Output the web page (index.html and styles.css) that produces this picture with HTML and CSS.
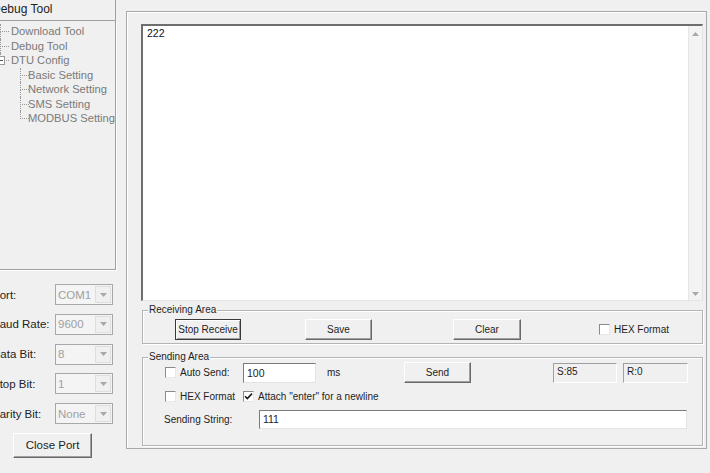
FILE: index.html
```html
<!DOCTYPE html>
<html lang="en">
<head>
    <meta charset="UTF-8">
    <meta name="viewport" content="width=device-width, initial-scale=1.0">
    <title>Debug Tool</title>
    <link rel="stylesheet" href="styles.css">
</head>
<body>

<div id="app">
    <!-- left pane: menu tree + port settings -->
    <div id="side">
        <div class="side-title">Debug Tool</div>
        <div class="tree">
            <ul class="tree-root">
                <li>Download Tool</li>
                <li>Debug Tool</li>
                <li><span class="toggle"></span>DTU Config
                    <ul class="tree-sub">
                        <li>Basic Setting</li>
                        <li>Network Setting</li>
                        <li>SMS Setting</li>
                        <li>MODBUS Setting</li>
                    </ul>
                </li>
            </ul>
        </div>

        <div class="port-form">
            <div class="form-row">
                <span class="form-label">Port:</span>
                <div class="combo"><span class="combo-value">COM1</span><span class="combo-btn"><svg width="7" height="4" viewBox="0 0 7 4"><path d="M0 0h7L3.5 4z" fill="#a8a8a8"/></svg></span></div>
            </div>
            <div class="form-row">
                <span class="form-label">Baud Rate:</span>
                <div class="combo"><span class="combo-value">9600</span><span class="combo-btn"><svg width="7" height="4" viewBox="0 0 7 4"><path d="M0 0h7L3.5 4z" fill="#a8a8a8"/></svg></span></div>
            </div>
            <div class="form-row">
                <span class="form-label">Data Bit:</span>
                <div class="combo"><span class="combo-value">8</span><span class="combo-btn"><svg width="7" height="4" viewBox="0 0 7 4"><path d="M0 0h7L3.5 4z" fill="#a8a8a8"/></svg></span></div>
            </div>
            <div class="form-row">
                <span class="form-label">Stop Bit:</span>
                <div class="combo"><span class="combo-value">1</span><span class="combo-btn"><svg width="7" height="4" viewBox="0 0 7 4"><path d="M0 0h7L3.5 4z" fill="#a8a8a8"/></svg></span></div>
            </div>
            <div class="form-row">
                <span class="form-label">Parity Bit:</span>
                <div class="combo"><span class="combo-value">None</span><span class="combo-btn"><svg width="7" height="4" viewBox="0 0 7 4"><path d="M0 0h7L3.5 4z" fill="#a8a8a8"/></svg></span></div>
            </div>
        </div>

        <button class="btn close-btn">Close Port</button>
    </div>

    <!-- right pane: receive / send -->
    <div id="main">
        <div class="receive-box">
            <div class="receive-text">222</div>
            <div class="scrollbar">
                <svg width="7" height="4" viewBox="0 0 7 4"><path d="M3.5 0L7 4H0z" fill="#a8a8a8"/></svg>
                <svg width="7" height="4" viewBox="0 0 7 4"><path d="M0 0h7L3.5 4z" fill="#a8a8a8"/></svg>
            </div>
        </div>

        <div class="group receive-group">
            <span class="group-title">Receiving Area</span>
            <div class="group-row">
                <button class="btn btn-default stop-btn">Stop Receive</button>
                <button class="btn save-btn">Save</button>
                <button class="btn clear-btn">Clear</button>
                <label class="check recv-hex"><span class="chk"></span>HEX Format</label>
            </div>
        </div>

        <div class="group send-group">
            <span class="group-title">Sending Area</span>
            <div class="send-row">
                <label class="check check-fixed"><span class="chk"></span>Auto Send:</label>
                <div class="field interval">100</div>
                <span class="unit">ms</span>
                <button class="btn send-btn">Send</button>
                <div class="stat stat-s">S:85</div>
                <div class="stat">R:0</div>
            </div>
            <div class="send-row row-opts">
                <label class="check check-fixed"><span class="chk"></span>HEX Format</label>
                <label class="check"><span class="chk"><svg width="9" height="9" viewBox="0 0 9 9"><path d="M1 4.2l2.3 2.4L8 1.6" fill="none" stroke="#1a1a1a" stroke-width="1.6"/></svg></span>Attach "enter" for a newline</label>
            </div>
            <div class="send-row row-string">
                <span class="string-label">Sending String:</span>
                <div class="field string-field">111</div>
            </div>
        </div>
    </div>
</div>

</body>
</html>
```

FILE: styles.css
```css
body {
    margin: 0;
    padding: 0;
    background-color: #f0f0f0;
    font-family: "Liberation Sans", Arial, sans-serif;
    color: #1e1e1e;
    overflow: hidden;
}

#app {
    display: flex;
    width: 710px;
    height: 473px;
    overflow: hidden;
}

/* ---------- left pane ---------- */

#side {
    width: 125px;
    margin-left: -8px; /* the pane is scrolled a little off the left edge */
    flex-shrink: 0;
}

.side-title {
    width: 123px;
    height: 19px;
    font-size: 12px;
    line-height: 16px;
    padding-top: 1px;
    color: #222;
    border-right: 1px solid #a0a0a0;
    border-bottom: 1px solid #a0a0a0;
}

.tree {
    width: 123px;
    height: 248px;
    border-right: 1px solid #a0a0a0;
    border-bottom: 1px solid #a0a0a0;
    box-shadow: 1px 1px 0 #fff;
    font-size: 11.2px;
    color: #7a7a7a;
}

.tree ul {
    list-style: none;
    margin: 0;
    padding: 0;
}

.tree li {
    position: relative;
    line-height: 14.5px;
    white-space: nowrap;
}

.tree li::before {
    content: "";
    position: absolute;
    left: 0;
    top: 0;
    width: 8px;
    height: 7px;
    border-left: 1px dotted #999;
    border-bottom: 1px dotted #999;
}

.tree li:not(:last-child)::after {
    content: "";
    position: absolute;
    left: 0;
    top: 7px;
    bottom: 0;
    border-left: 1px dotted #999;
}

.tree-root {
    margin-left: 8px !important;
    padding-top: 3px !important;
}

.tree-root > li {
    padding-left: 11px;
}

.tree-sub {
    margin-left: 9px !important;
}

.tree-sub > li {
    padding-left: 8px;
}

.toggle {
    position: absolute;
    left: -4px;
    top: 3px;
    width: 7px;
    height: 7px;
    border: 1px solid #999;
    background: #fff;
    z-index: 1;
}

.toggle::after {
    content: "";
    position: absolute;
    left: 1px;
    top: 3px;
    width: 5px;
    height: 1px;
    background: #555;
}

.port-form {
    margin-top: 14px;
}

.form-row {
    display: flex;
    align-items: center;
    height: 21px;
    margin-bottom: 8.75px;
    font-size: 11.5px;
}

.form-label {
    width: 63px;
    flex-shrink: 0;
}

.combo {
    display: flex;
    align-items: center;
    justify-content: space-between;
    width: 58px;
    height: 21px;
    box-sizing: border-box;
    border: 1px solid #a8a8a8;
    background: #f4f4f4;
    color: #a0a0a0;
    padding: 0 1px 0 2px;
}

.combo-btn {
    display: flex;
    align-items: center;
    justify-content: center;
    width: 14px;
    height: 15px;
    border: 1px solid #dedede;
    background: #f0f0f0;
}

.btn {
    font-family: "Liberation Sans", Arial, sans-serif;
    background: #f0f0f0;
    color: #1e1e1e;
    border: 1px solid;
    border-color: #fff #696969 #696969 #fff;
    box-shadow: inset -1px -1px 0 #a0a0a0;
    padding: 0;
    cursor: pointer;
}

.close-btn {
    display: block;
    margin: 0 0 0 21px;
    width: 79px;
    height: 25px;
    font-size: 11.5px;
}

/* ---------- right pane ---------- */

#main {
    margin-left: 9px;
    margin-top: 11px;
    width: 581px;
    height: 438px;
    box-sizing: border-box;
    border: 1px solid #a8a8a8;
    box-shadow: inset 1px 1px 0 #fff;
    padding: 12px 3px 0 14px;
    font-size: 10px;
}

.receive-box {
    display: flex;
    height: 277px;
    box-sizing: border-box;
    border-top: 2px solid #6e6e6e;
    border-left: 2px solid #6e6e6e;
    border-right: 1px solid #e3e3e3;
    border-bottom: 1px solid #e3e3e3;
    background: #fff;
}

.receive-text {
    flex: 1;
    padding: 1px 4px;
    font-size: 10.5px;
    color: #111;
}

.scrollbar {
    display: flex;
    flex-direction: column;
    justify-content: space-between;
    align-items: center;
    width: 13px;
    padding: 6px 0 4px;
    background: #f3f3f3;
    border-left: 1px solid #e6e6e6;
}

.group {
    position: relative;
    box-sizing: border-box;
    border: 1px solid #b4b4b4;
    box-shadow: inset 1px 1px 0 #fff, 1px 1px 0 #fff;
    margin-left: 1px;
}

.group-title {
    position: absolute;
    left: 5px;
    top: -7px;
    padding: 0 1px;
    line-height: 12px;
    background: #f0f0f0;
}

.receive-group {
    margin-top: 9px;
    height: 34px;
    padding-top: 8px;
}

.group-row {
    display: flex;
    align-items: center;
}

.group-row .btn,
.send-btn {
    height: 21px;
    font-size: 10px;
}

.stop-btn {
    margin-left: 32px;
    width: 66px;
    border: 1px solid #3a3a3a;
    box-shadow: inset 1px 1px 0 #fff, inset -1px -1px 0 #a0a0a0;
}

.save-btn {
    margin-left: 64px;
    width: 67px;
}

.clear-btn {
    margin-left: 81px;
    width: 68px;
}

.check {
    display: flex;
    align-items: center;
    white-space: nowrap;
}

.chk {
    display: flex;
    align-items: center;
    justify-content: center;
    width: 11px;
    height: 11px;
    box-sizing: border-box;
    margin-right: 4px;
    border: 1px solid;
    border-color: #8a8a8a #e8e8e8 #e8e8e8 #8a8a8a;
    background: #fff;
}

.recv-hex {
    margin-left: 78px;
}

.send-group {
    margin-top: 13px;
    height: 89px;
    padding: 4px 0 0 22px;
}

.send-row {
    display: flex;
    align-items: center;
    height: 21px;
}

.check-fixed {
    width: 78px;
}

.field {
    height: 20px;
    box-sizing: border-box;
    background: #fff;
    border: 1px solid;
    border-color: #7a7a7a #e3e3e3 #e3e3e3 #7a7a7a;
    padding: 0 3px;
    line-height: 18px;
    font-size: 10.5px;
}

.interval {
    width: 73px;
}

.unit {
    margin-left: 11px;
    width: 77px;
}

.send-btn {
    width: 67px;
}

.stat {
    width: 65px;
    height: 20px;
    box-sizing: border-box;
    margin-left: 6px;
    padding: 0 3px;
    line-height: 16px;
    border: 1px solid;
    border-color: #a0a0a0 #fff #fff #a0a0a0;
}

.stat-s {
    margin-left: 82px;
    width: 64px;
}

.row-opts {
    height: 14px;
    margin-top: 6px;
}

.row-string {
    margin-top: 7px;
    height: 19px;
}

.string-label {
    width: 95px;
    margin-left: -1px;
}

.string-field {
    width: 428px;
    height: 19px;
    line-height: 17px;
}
```
